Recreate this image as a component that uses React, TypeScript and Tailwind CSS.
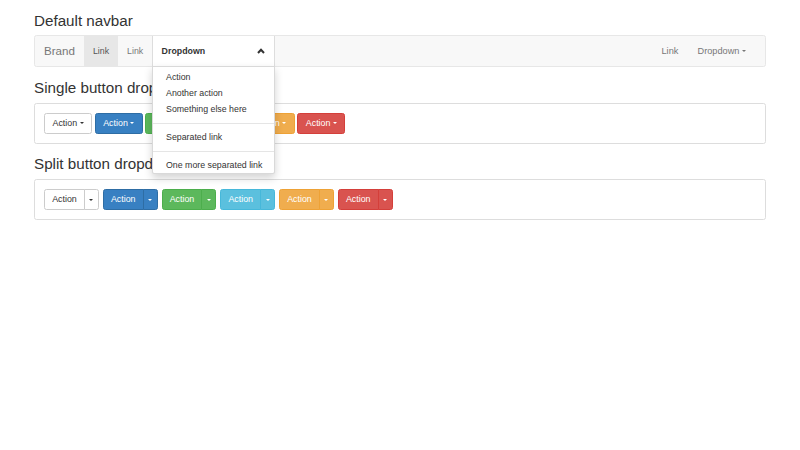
import React from "react";

const variants = [
  "bg-white border-[#ccc] text-[#333]",
  "bg-[#3880c2] border-[#2e6da4] text-white",
  "bg-[#5cb85c] border-[#4cae4c] text-white",
  "bg-[#5bc0de] border-[#46b8da] text-white",
  "bg-[#f0ad4e] border-[#eea236] text-white",
  "bg-[#d9534f] border-[#d43f3a] text-white",
];

function Caret() {
  return (
    <span className="inline-block w-0 h-0 border-solid border-t-[2.6px] border-x-[2.6px] border-b-0 border-x-transparent align-middle" />
  );
}

function Single({ cls }: { cls: string }) {
  return (
    <button className={`h-[21px] px-[7.5px] border rounded-[2.5px] flex items-center text-[8.9px] leading-none ${cls}`}>
      Action
      <span className="ml-[2.4px] flex items-center">
        <Caret />
      </span>
    </button>
  );
}

function Split({ cls }: { cls: string }) {
  return (
    <div className="flex">
      <button className={`h-[21px] px-[7.15px] border rounded-l-[2.5px] flex items-center text-[8.9px] leading-none ${cls}`}>
        Action
      </button>
      <button className={`h-[21px] px-[4.5px] -ml-px border rounded-r-[2.5px] flex items-center ${cls}`}>
        <Caret />
      </button>
    </div>
  );
}

export default function App() {
  return (
    <div className="min-h-[450px] bg-white text-[#333] font-['Liberation_Sans',Arial,sans-serif] px-[34px] text-[8.8px] leading-[12.4px]">
      <h3 className="text-[15.2px] leading-[16.5px] mt-[12.5px] mb-[6px] font-normal">Default navbar</h3>
      <nav className="relative z-10 flex h-[32px] border border-[#e7e7e7] bg-[#f8f8f8] rounded-[2.5px] mb-[12.8px]">
        <a className="px-[9px] flex items-center text-[11.6px] text-[#777]">Brand</a>
        <a className="px-[9px] flex items-center bg-[#e7e7e7] text-[#555]">Link</a>
        <a className="px-[9px] flex items-center text-[#777]">Link</a>
        <div className="relative w-[123px] bg-white border-x border-[#ddd] flex items-center justify-between px-[8.4px] font-bold text-[#333]">
          <span>Dropdown</span>
          <svg width="8" height="6" viewBox="0 0 8 6" className="mr-[0.5px]">
            <polyline points="1,5 4,1.8 7,5" fill="none" stroke="#333" strokeWidth="2" />
          </svg>
          <div className="absolute left-[-1px] top-full w-[123px] bg-white border border-[rgba(0,0,0,0.15)] rounded-b-[2.5px] shadow-[0_4px_8px_rgba(0,0,0,0.175)] pt-[2px] font-normal text-[#333]">
            <div className="px-[12.8px] py-[1.7px] leading-[12.8px] whitespace-nowrap">Action</div>
            <div className="px-[12.8px] py-[1.7px] leading-[12.8px] whitespace-nowrap">Another action</div>
            <div className="px-[12.8px] py-[1.7px] leading-[12.8px] whitespace-nowrap">Something else here</div>
            <div className="h-px my-[5.4px] bg-[#e5e5e5]" />
            <div className="px-[12.8px] py-[1.7px] leading-[12.8px] whitespace-nowrap">Separated link</div>
            <div className="h-px my-[5.4px] bg-[#e5e5e5]" />
            <div className="px-[12.8px] py-[1.7px] leading-[12.8px] whitespace-nowrap">One more separated link</div>
          </div>
        </div>
        <div className="ml-auto flex mr-[9.6px] text-[9.2px]">
          <a className="px-[9.6px] flex items-center text-[#777]">Link</a>
          <a className="px-[9.6px] flex items-center text-[#777]">
            Dropdown
            <span className="ml-[2.4px] flex items-center">
              <Caret />
            </span>
          </a>
        </div>
      </nav>

      <h3 className="text-[15.2px] leading-[16.5px] mt-[12.8px] mb-[6.4px] font-normal">Single button dropdowns</h3>
      <div className="border border-[#ddd] rounded-[2.5px] p-[9px] flex gap-[2.6px] mb-[12.8px]">
        {variants.map((v, i) => (
          <Single key={i} cls={v} />
        ))}
      </div>

      <h3 className="text-[15.2px] leading-[16.5px] mt-[12.8px] mb-[6.4px] font-normal">Split button dropdowns</h3>
      <div className="border border-[#ddd] rounded-[2.5px] p-[9px] flex gap-[3.8px] mb-[12.8px]">
        {variants.map((v, i) => (
          <Split key={i} cls={v} />
        ))}
      </div>
    </div>
  );
}
